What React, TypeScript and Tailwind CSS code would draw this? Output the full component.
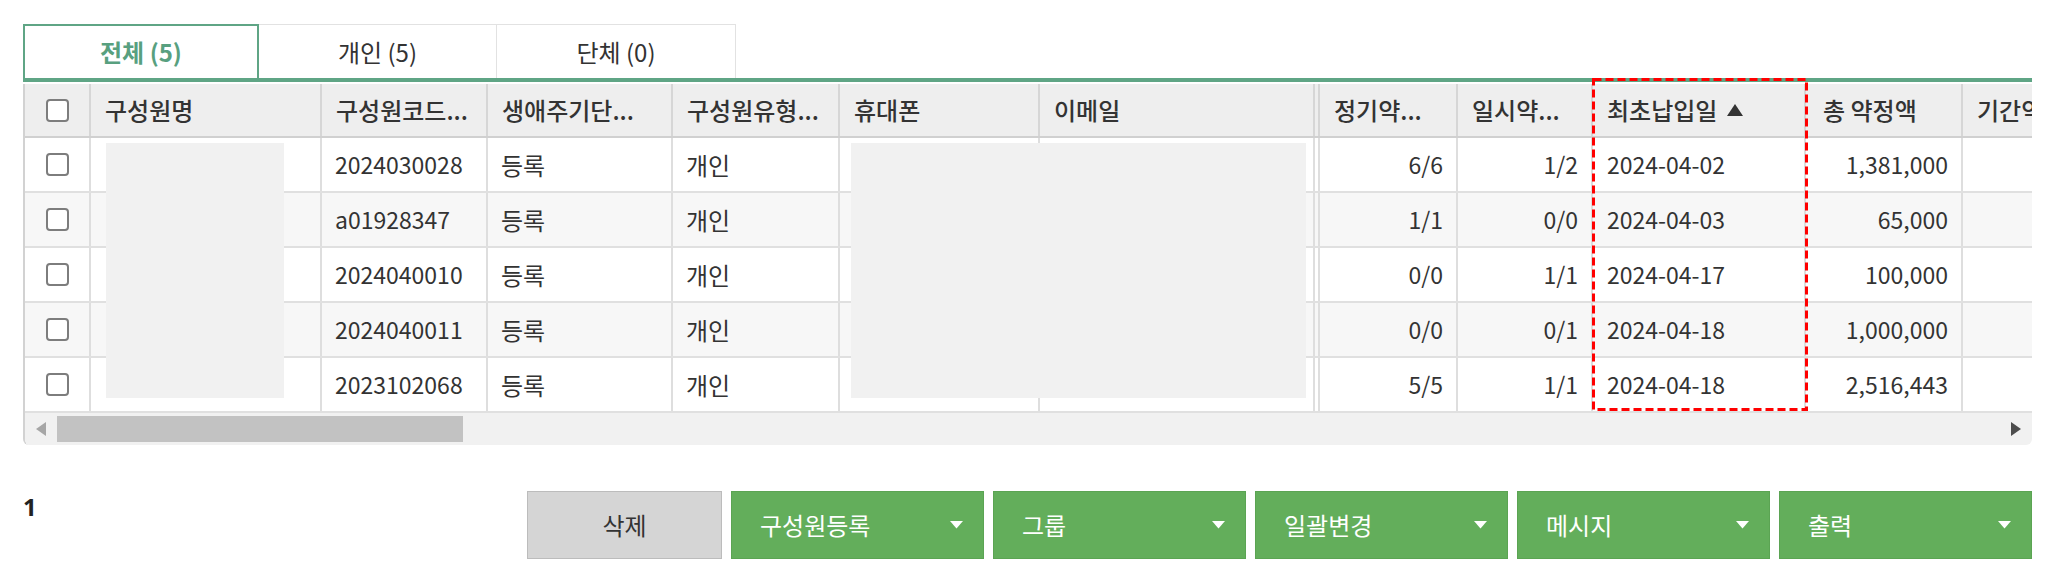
import React from "react";

const COLS =
  "grid grid-cols-[66px_231px_166px_185px_167px_200px_275px_5px_138px_135px_213px_157px_150px] w-max";

const rows = [
  ["2024030028", "등록", "개인", "6/6", "1/2", "2024-04-02", "1,381,000"],
  ["a01928347", "등록", "개인", "1/1", "0/0", "2024-04-03", "65,000"],
  ["2024040010", "등록", "개인", "0/0", "1/1", "2024-04-17", "100,000"],
  ["2024040011", "등록", "개인", "0/0", "0/1", "2024-04-18", "1,000,000"],
  ["2023102068", "등록", "개인", "5/5", "1/1", "2024-04-18", "2,516,443"],
];

function Checkbox() {
  return <div className="w-[23px] h-[23px] rounded-[4px] border-2 border-[#7d7d7d] bg-white" />;
}

function Caret() {
  return (
    <svg width="13" height="8" viewBox="0 0 13 8" className="shrink-0">
      <path d="M0 0 L13 0 L6.5 7.5 Z" fill="#ffffff" />
    </svg>
  );
}

const hcell = "flex items-center px-[14px] border-r-2 border-[#d6d6d6] whitespace-nowrap overflow-hidden";
const dcell = "flex items-center px-[13px] border-r-2 border-[#dedede] whitespace-nowrap overflow-hidden";

export default function App() {
  return (
    <div className="relative w-[2062px] h-[580px] bg-white text-[#333333] font-['Noto_Sans_CJK_KR','Noto_Sans',sans-serif]">
      <div className="pl-[23px] pt-[24px] w-[2032px]">
        {/* Tabs */}
        <div className="flex h-[54px] text-[24px]">
          <div className="w-[236px] flex items-center justify-center border-t-2 border-l-2 border-r-2 border-[#5fa585] text-[#58a07f] font-bold">
            전체 (5)
          </div>
          <div className="w-[238px] flex items-center justify-center border-t border-r border-[#e2e2e2]">
            개인 (5)
          </div>
          <div className="w-[239px] flex items-center justify-center border-t border-r border-[#e2e2e2]">
            단체 (0)
          </div>
        </div>
        <div className="h-[4px] bg-[#5fa585] w-[2009px]" />
        <div className="h-[2px]" />

        {/* Table */}
        <div className="w-[2009px] overflow-hidden border-l-2 border-[#d2d2d2] rounded-bl-[6px] rounded-br-[6px] text-[23px]">
          {/* header */}
          <div className={`${COLS} h-[54px] bg-[#eeeeee] border-b-2 border-[#d0d0d0] font-medium text-[24px]`}>
            <div className="flex items-center justify-center border-r-2 border-[#d6d6d6]">
              <Checkbox />
            </div>
            <div className={hcell}>구성원명</div>
            <div className={hcell}>구성원코드...</div>
            <div className={hcell}>생애주기단...</div>
            <div className={hcell}>구성원유형...</div>
            <div className={hcell}>휴대폰</div>
            <div className={hcell}>이메일</div>
            <div className="border-r-2 border-[#d6d6d6]" />
            <div className={hcell}>정기약...</div>
            <div className={hcell}>일시약...</div>
            <div className={`${hcell} gap-[10px]`}>
              <span>최초납입일</span>
              <svg width="16" height="12" viewBox="0 0 16 12" className="shrink-0">
                <path d="M0 12 L8 0 L16 12 Z" fill="#333333" />
              </svg>
            </div>
            <div className={`${hcell} pl-[17px]`}>총 약정액</div>
            <div className={`${hcell} pr-0`}>기간약정</div>
          </div>

          {rows.map((r, i) => (
            <div
              key={i}
              className={`${COLS} h-[55px] border-b-2 border-[#e0e0e0] ${i % 2 === 1 ? "bg-[#f7f7f7]" : "bg-white"}`}
            >
              <div className="flex items-center justify-center border-r-2 border-[#dedede]">
                <Checkbox />
              </div>
              <div className={dcell}></div>
              <div className={dcell}>{r[0]}</div>
              <div className={`${dcell} text-[24px]`}>{r[1]}</div>
              <div className={`${dcell} text-[24px]`}>{r[2]}</div>
              <div className={dcell}></div>
              <div className={dcell}></div>
              <div className="border-r-2 border-[#dedede]" />
              <div className={`${dcell} justify-end`}>{r[3]}</div>
              <div className={`${dcell} justify-end`}>{r[4]}</div>
              <div className={`${dcell} pl-[14px]`}>{r[5]}</div>
              <div className={`${dcell} justify-end`}>{r[6]}</div>
              <div className={dcell}></div>
            </div>
          ))}

          {/* horizontal scrollbar */}
          <div className="h-[32px] bg-[#f1f1f1] flex items-center">
            <div className="w-[32px] flex items-center justify-center">
              <svg width="10" height="14" viewBox="0 0 10 14">
                <path d="M10 0 L0 7 L10 14 Z" fill="#a6a6a6" />
              </svg>
            </div>
            <div className="w-[406px] h-[26px] bg-[#c2c2c2]" />
            <div className="flex-1" />
            <div className="w-[32px] flex items-center justify-center">
              <svg width="10" height="14" viewBox="0 0 10 14">
                <path d="M0 0 L10 7 L0 14 Z" fill="#4d4d4d" />
              </svg>
            </div>
          </div>
        </div>

        {/* bottom bar */}
        <div className="mt-[46px] w-[2009px] flex items-start justify-between">
          <div className="text-[24px] font-bold leading-[32px] text-[#222222] font-['Noto_Sans',sans-serif]">1</div>
          <div className="flex gap-[9px] text-[24px]">
            <button className="w-[195px] h-[68px] bg-[#d5d5d5] border border-[#bcbcbc] text-[#333333] flex items-center justify-center">
              삭제
            </button>
            {["구성원등록", "그룹", "일괄변경", "메시지", "출력"].map((t) => (
              <button
                key={t}
                className="w-[253px] h-[68px] bg-[#63ae5b] border border-[#5ba453] text-white flex items-center justify-between pl-[28px] pr-[20px]"
              >
                <span>{t}</span>
                <Caret />
              </button>
            ))}
          </div>
        </div>
      </div>

      {/* redaction overlays */}
      <div className="absolute left-[106px] top-[143px] w-[178px] h-[255px] bg-[#f1f1f1]" />
      <div className="absolute left-[851px] top-[143px] w-[455px] h-[255px] bg-[#f1f1f1]" />

      {/* red dashed annotation */}
      <svg className="absolute left-[1592px] top-[78px]" width="216" height="333" viewBox="0 0 216 333">
        <rect x="1.5" y="1.5" width="213" height="330" fill="none" stroke="#ff0000" strokeWidth="3" strokeDasharray="8 4" />
      </svg>
    </div>
  );
}
